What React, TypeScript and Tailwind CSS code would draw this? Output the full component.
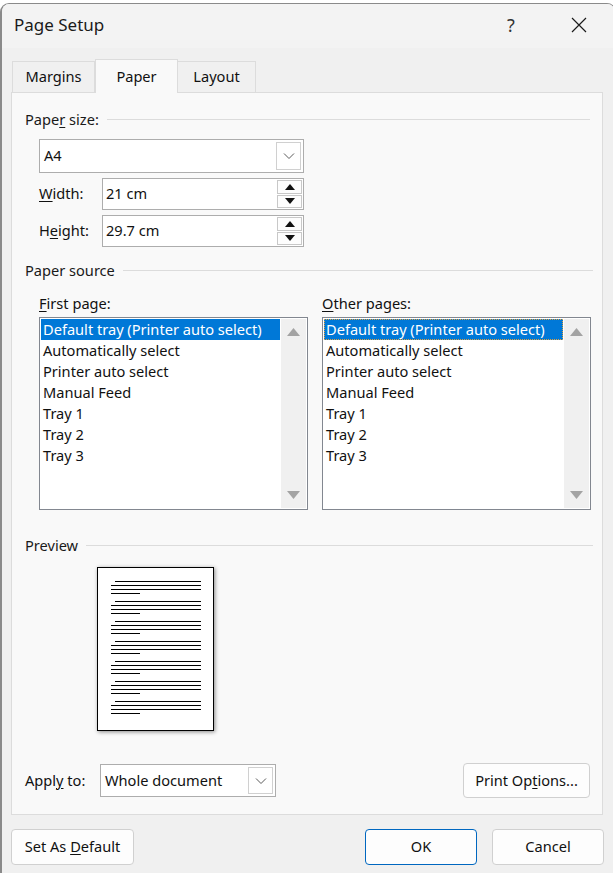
import React from "react";

const F = { fontFamily: '"Segoe UI", "Noto Sans", "Open Sans", sans-serif' };

function U({ children }: { children: React.ReactNode }) {
  return <span className="underline underline-offset-2 decoration-1">{children}</span>;
}

function GroupLabel({ children }: { children: React.ReactNode }) {
  return (
    <div className="flex items-center gap-2 h-[20px]">
      <span className="text-[14.6px] text-[#1a1a1a] leading-none">{children}</span>
      <div className="flex-1 h-px bg-[#dcdcdc]" />
    </div>
  );
}

function Chevron() {
  return (
    <svg width="12" height="8" viewBox="0 0 12 8">
      <path d="M1 1.5 L6 6.5 L11 1.5" fill="none" stroke="#5a5a5a" strokeWidth="1" />
    </svg>
  );
}

function Spinner() {
  return (
    <div className="flex flex-col w-[25px] h-[28px] mr-[1px] gap-[1px]">
      <div className="flex-1 border border-[#c8c8c8] bg-[#fdfdfd] flex items-center justify-center">
        <svg width="10" height="6" viewBox="0 0 10 6"><path d="M0 6 L5 0 L10 6 Z" fill="#111" /></svg>
      </div>
      <div className="flex-1 border border-[#c8c8c8] bg-[#fdfdfd] flex items-center justify-center">
        <svg width="10" height="6" viewBox="0 0 10 6"><path d="M0 0 L5 6 L10 0 Z" fill="#111" /></svg>
      </div>
    </div>
  );
}

const items = [
  "Default tray (Printer auto select)",
  "Automatically select",
  "Printer auto select",
  "Manual Feed",
  "Tray 1",
  "Tray 2",
  "Tray 3",
];

function ListBox({ focus }: { focus?: boolean }) {
  return (
    <div className="w-[269px] h-[193px] border border-[#828790] bg-white flex p-px">
      <div className="flex-1 flex flex-col">
        {items.map((it, i) => (
          <div
            key={it}
            className={
              "h-[21px] flex items-center pl-[2px] text-[14.6px] leading-none " +
              (i === 0
                ? "bg-[#0078d7] text-white mr-[1px] " + (focus ? "outline outline-1 outline-dotted outline-[#e0a040] -outline-offset-1" : "")
                : "text-[#111]")
            }
          >
            {it}
          </div>
        ))}
      </div>
      <div className="w-[25px] bg-[#f0f0f0] flex flex-col items-center justify-between py-[9px]">
        <svg width="13" height="8" viewBox="0 0 13 8"><path d="M0 8 L6.5 0 L13 8 Z" fill="#a3a3a3" /></svg>
        <svg width="13" height="8" viewBox="0 0 13 8"><path d="M0 0 L6.5 8 L13 0 Z" fill="#a3a3a3" /></svg>
      </div>
    </div>
  );
}

function PagePreview() {
  const groups = Array.from({ length: 7 });
  return (
    <div className="w-[117px] h-[164px] bg-white border border-black shadow-[1px_1px_4px_rgba(0,0,0,0.45)] pt-[13px] pl-[13px]">
      <div className="flex flex-col gap-[7px]">
        {groups.map((_, g) => (
          <div key={g} className="flex flex-col gap-[3px]">
            <div className="h-px bg-black w-[86px] ml-[4px]" />
            <div className="h-px bg-black w-[90px]" />
            <div className="h-px bg-black w-[90px]" />
            <div className="h-px bg-black w-[29px]" />
          </div>
        ))}
      </div>
    </div>
  );
}

function Button({ children, primary, w }: { children: React.ReactNode; primary?: boolean; w: string }) {
  return (
    <div
      className={
        "h-[36px] rounded-[4px] bg-[#fdfdfd] flex items-center justify-center text-[14.6px] text-[#111] " +
        w +
        (primary ? " border border-[#0067c0]" : " border border-[#d0d0d0]")
      }
    >
      <span>{children}</span>
    </div>
  );
}

export default function App() {
  return (
    <div style={F} className="w-[613px] h-[873px] bg-white pt-[3px] overflow-hidden">
      <div className="w-[616px] h-[872px] rounded-tl-[9px] rounded-tr-[9px] border-l-2 border-t border-r border-[#8a8a8a] bg-[#f0f0f0] flex flex-col overflow-hidden">
        {/* Title bar */}
        <div className="h-[44px] bg-[#f3f3f3] flex items-center pl-[12px] pb-[2px] shrink-0">
          <span className="text-[17px] text-[#1a1a1a] flex-1">Page Setup</span>
          <span className="text-[18px] text-[#333] w-[20px] text-center mr-[50px]">?</span>
          <svg width="16" height="16" viewBox="0 0 16 16" className="mr-[28px]">
            <path d="M1 1 L15 15 M15 1 L1 15" stroke="#1a1a1a" strokeWidth="1.2" />
          </svg>
        </div>

        {/* Tabs */}
        <div className="pl-[10px] pt-[11px] flex items-end h-[44px] shrink-0">
          <div className="w-[83px] h-[31px] border border-b-0 border-[#dcdcdc] bg-[#f0f0f0] flex items-center justify-center text-[14.6px] text-[#111]">Margins</div>
          <div className="w-[83px] h-[34px] border border-b-0 border-[#dcdcdc] bg-[#f9f9f9] flex items-center justify-center text-[14.6px] text-[#111] -mb-px relative z-10">Paper</div>
          <div className="w-[78px] h-[31px] border border-b-0 border-l-0 border-[#dcdcdc] bg-[#f0f0f0] flex items-center justify-center text-[14.6px] text-[#111]">Layout</div>
        </div>

        {/* Panel */}
        <div className="ml-[9px] w-[592px] h-[723px] border border-[#dcdcdc] bg-[#f9f9f9] pl-[13px] pr-[12px] pt-[16px] flex flex-col shrink-0">
          <GroupLabel>Pape<U>r</U> size:</GroupLabel>

          <div className="pl-[14px] mt-[10px] flex flex-col gap-[5px]">
            <div className="w-[265px] h-[34px] border border-[#adadad] bg-white flex items-center">
              <span className="text-[14.6px] text-[#111] pl-[4px] flex-1">A4</span>
              <div className="w-[25px] h-[28px] mr-[2px] border border-[#d0d0d0] flex items-center justify-center">
                <Chevron />
              </div>
            </div>
            <div className="flex items-center h-[32px]">
              <span className="w-[63px] text-[14.6px] text-[#111]"><U>W</U>idth:</span>
              <div className="w-[202px] h-[32px] border border-[#adadad] bg-white flex items-center">
                <span className="flex-1 text-[14.6px] text-[#111] pl-[3px]">21 cm</span>
                <Spinner />
              </div>
            </div>
            <div className="flex items-center h-[32px]">
              <span className="w-[63px] text-[14.6px] text-[#111]">H<U>e</U>ight:</span>
              <div className="w-[202px] h-[32px] border border-[#adadad] bg-white flex items-center">
                <span className="flex-1 text-[14.6px] text-[#111] pl-[3px]">29.7 cm</span>
                <Spinner />
              </div>
            </div>
          </div>

          <div className="mt-[13px] -mr-[3px]">
            <GroupLabel>Paper source</GroupLabel>
          </div>

          <div className="pl-[14px] mt-[13px] flex gap-[14px]">
            <div className="flex flex-col">
              <span className="text-[14.6px] text-[#111] h-[24px] leading-[20px]"><U>F</U>irst page:</span>
              <ListBox />
            </div>
            <div className="flex flex-col">
              <span className="text-[14.6px] text-[#111] h-[24px] leading-[20px]"><U>O</U>ther pages:</span>
              <ListBox focus />
            </div>
          </div>

          <div className="mt-[25px] -mr-[3px]">
            <GroupLabel>Preview</GroupLabel>
          </div>

          <div className="pl-[72px] mt-[12px]">
            <PagePreview />
          </div>

          <div className="mt-[32px] flex items-center">
            <span className="w-[75px] text-[14.6px] text-[#111]">Appl<U>y</U> to:</span>
            <div className="w-[176px] h-[33px] border border-[#adadad] bg-white flex items-center">
              <span className="flex-1 text-[14.6px] text-[#111] pl-[4px]">Whole document</span>
              <div className="w-[25px] h-[27px] mr-[2px] border border-[#d0d0d0] flex items-center justify-center">
                <Chevron />
              </div>
            </div>
            <div className="flex-1" />
            <div className="w-[127px] h-[35px] rounded-[4px] border border-[#d0d0d0] bg-[#fdfdfd] flex items-center justify-center text-[14.6px] text-[#111]">
              <span>Print Op<U>t</U>ions...</span>
            </div>
          </div>
        </div>

        {/* Bottom buttons */}
        <div className="flex items-center mt-[14px] pl-[9px]">
          <Button w="w-[123px]">Set As <U>D</U>efault</Button>
          <div className="flex-1" />
          <Button primary w="w-[112px]">OK</Button>
          <div className="w-[15px]" />
          <Button w="w-[112px]">Cancel</Button>
          <div className="w-[11px]" />
        </div>
      </div>
    </div>
  );
}
